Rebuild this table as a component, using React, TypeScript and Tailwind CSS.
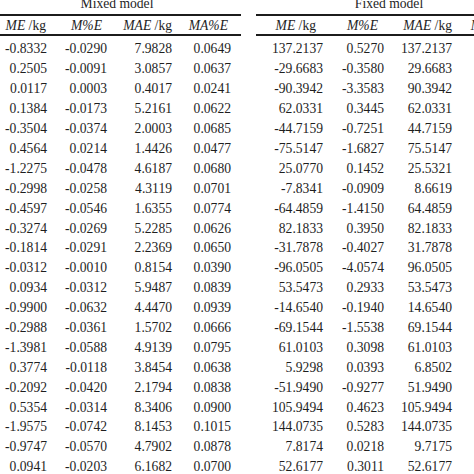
import React from "react";

const mixed: string[][] = [
  ["-0.8332", "-0.0290", "7.9828", "0.0649"],
  ["0.2505", "-0.0091", "3.0857", "0.0637"],
  ["0.0117", "0.0003", "0.4017", "0.0241"],
  ["0.1384", "-0.0173", "5.2161", "0.0622"],
  ["-0.3504", "-0.0374", "2.0003", "0.0685"],
  ["0.4564", "0.0214", "1.4426", "0.0477"],
  ["-1.2275", "-0.0478", "4.6187", "0.0680"],
  ["-0.2998", "-0.0258", "4.3119", "0.0701"],
  ["-0.4597", "-0.0546", "1.6355", "0.0774"],
  ["-0.3274", "-0.0269", "5.2285", "0.0626"],
  ["-0.1814", "-0.0291", "2.2369", "0.0650"],
  ["-0.0312", "-0.0010", "0.8154", "0.0390"],
  ["0.0934", "-0.0312", "5.9487", "0.0839"],
  ["-0.9900", "-0.0632", "4.4470", "0.0939"],
  ["-0.2988", "-0.0361", "1.5702", "0.0666"],
  ["-1.3981", "-0.0588", "4.9139", "0.0795"],
  ["0.3774", "-0.0118", "3.8454", "0.0638"],
  ["-0.2092", "-0.0420", "2.1794", "0.0838"],
  ["0.5354", "-0.0314", "8.3406", "0.0900"],
  ["-1.9575", "-0.0742", "8.1453", "0.1015"],
  ["-0.9747", "-0.0570", "4.7902", "0.0878"],
  ["0.0941", "-0.0203", "6.1682", "0.0700"],
];

const fixed: string[][] = [
  ["137.2137", "0.5270", "137.2137", "0.5270"],
  ["-29.6683", "-0.3580", "29.6683", "0.3580"],
  ["-90.3942", "-3.3583", "90.3942", "3.3583"],
  ["62.0331", "0.3445", "62.0331", "0.3445"],
  ["-44.7159", "-0.7251", "44.7159", "0.7251"],
  ["-75.5147", "-1.6827", "75.5147", "1.6827"],
  ["25.0770", "0.1452", "25.5321", "0.1479"],
  ["-7.8341", "-0.0909", "8.6619", "0.1012"],
  ["-64.4859", "-1.4150", "64.4859", "1.4150"],
  ["82.1833", "0.3950", "82.1833", "0.3950"],
  ["-31.7878", "-0.4027", "31.7878", "0.4027"],
  ["-96.0505", "-4.0574", "96.0505", "4.0574"],
  ["53.5473", "0.2933", "53.5473", "0.2933"],
  ["-14.6540", "-0.1940", "14.6540", "0.1940"],
  ["-69.1544", "-1.5538", "69.1544", "1.5538"],
  ["61.0103", "0.3098", "61.0103", "0.3098"],
  ["5.9298", "0.0393", "6.8502", "0.0451"],
  ["-51.9490", "-0.9277", "51.9490", "0.9277"],
  ["105.9494", "0.4623", "105.9494", "0.4623"],
  ["144.0735", "0.5283", "144.0735", "0.5283"],
  ["7.8174", "0.0218", "9.7175", "0.0270"],
  ["52.6177", "0.3011", "52.6177", "0.3011"],
];

function Header({ which }: { which: number }) {
  if (which === 0)
    return (
      <>
        <i>ME</i> /kg
      </>
    );
  if (which === 1) return <i>M%E</i>;
  if (which === 2)
    return (
      <>
        <i>MAE</i> /kg
      </>
    );
  return <i>MA%E</i>;
}

function Table({
  title,
  widthClass,
  cols,
  headPad,
  rows,
}: {
  title: string;
  widthClass: string;
  cols: string[];
  headPad: string[];
  rows: string[][];
}) {
  return (
    <div className={`${widthClass} shrink-0 flex flex-col`}>
      <div className="text-center leading-[7.8px] pb-[6.7px] whitespace-nowrap">{title}</div>
      <div className="h-[1.5px] bg-[#1c1c1c]" />
      <div className="flex h-[18.5px] leading-[20px] whitespace-nowrap">
        {cols.map((c, i) => (
          <div key={i} className={`${c} shrink-0 text-right ${headPad[i]}`}>
            <Header which={i} />
          </div>
        ))}
      </div>
      <div className="h-[1.5px] bg-[#1c1c1c]" />
      <div className="pt-[3.5px] flex flex-col">
        {rows.map((r, ri) => (
          <div key={ri} className="flex h-[19.9px] leading-[19.9px] whitespace-nowrap">
            {r.map((v, ci) => (
              <div key={ci} className={`${cols[ci]} shrink-0 text-right`}>
                {v}
              </div>
            ))}
          </div>
        ))}
      </div>
    </div>
  );
}

export default function App() {
  return (
    <div
      className="w-[474px] h-[474px] overflow-hidden bg-white text-[#1e1e1e] text-[13.6px]"
      style={{ fontFamily: '"Liberation Serif", "Times New Roman", serif' }}
    >
      <div className="flex -ml-[7px] gap-[15px]">
        <Table
          title="Mixed model"
          widthClass="w-[248px]"
          cols={["w-[54px]", "w-[60px]", "w-[65px]", "w-[59px]"]}
          headPad={["pr-[1px]", "pr-[5px]", "-mr-[2px]", "pr-[1px]"]}
          rows={mixed}
        />
        <Table
          title="Fixed model"
          widthClass="w-[266px]"
          cols={["w-[67px]", "w-[61px]", "w-[68px]", "w-[70px]"]}
          headPad={["pr-[7px]", "pr-[6px]", "pr-[0px]", "pr-[12px]"]}
          rows={fixed}
        />
      </div>
    </div>
  );
}
